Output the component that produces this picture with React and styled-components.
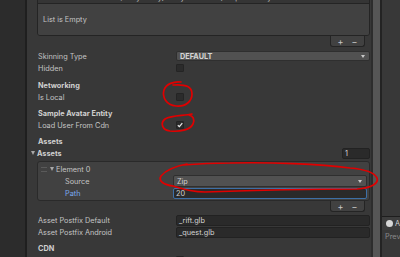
import styled, { createGlobalStyle } from 'styled-components'

const GlobalStyle = createGlobalStyle`
  html, body {
    margin: 0;
    padding: 0;
    background: #383838;
  }
  body {
    font-family: Inter, "Noto Sans", sans-serif;
  }
`

const SFrame = styled.div`
  position: relative;
  width: 400px;
  height: 257px;
  overflow: hidden;
  display: flex;
  background: #383838;
  color: #c4c4c4;
  font-size: 7.3px;
`

const SSidePanel = styled.div`
  width: 25px;
  background: #2c2c2c;
  border-right: 2px solid #1f1f1f;
`

const SInspector = styled.div`
  width: 333px;
  padding: 0 1px 0 10px;
  display: flex;
  flex-direction: column;

  & > * {
    flex-shrink: 0;
  }
`

const SList = styled.div`
  margin-top: -9px;
  border: 1px solid #242424;
  border-radius: 3px;
  overflow: hidden;
`

const SListHeader = styled.div`
  height: 11px;
  line-height: 11px;
  padding-left: 5px;
  background: #353535;
  border-bottom: 1px solid #242424;
  white-space: nowrap;
  overflow: hidden;
`

const SListBody = styled.div`
  height: 31px;
  padding-left: 5px;
  background: #414141;
  display: flex;
  align-items: center;
  padding-bottom: 1px;
  box-sizing: border-box;
`

const SFooter = styled.div`
  align-self: flex-end;
  margin-right: 5px;
  width: 35px;
  height: 11px;
  background: #414141;
  border: 1px solid #242424;
  border-top: none;
  border-radius: 0 0 3px 3px;
  display: flex;
  align-items: center;
  justify-content: center;
  gap: 8px;
  color: #c8c8c8;
  font-size: 9px;
  box-sizing: border-box;
`

const SRow = styled.div`
  height: 12px;
  flex-shrink: 0;
  display: flex;
  align-items: center;
  margin-top: ${(p) => p.$mt || 0}px;
`

const SLabel = styled.div`
  width: ${(p) => p.$w || 138}px;
  padding-left: ${(p) => p.$pl || 1}px;
  flex-shrink: 0;
  white-space: nowrap;
  color: ${(p) => (p.$active ? '#7baaf0' : '#c4c4c4')};
`

const SHeader = styled.div`
  height: 10px;
  line-height: 10px;
  padding-left: 1px;
  font-weight: 700;
  color: #d0d0d0;
  margin-top: ${(p) => p.$mt || 0}px;
`

const SDropdown = styled.div`
  flex: 1;
  height: ${(p) => p.$h || 10}px;
  margin-right: ${(p) => p.$mr || 0}px;
  background: #515151;
  border: 1px solid #2f2f2f;
  border-radius: 2px;
  box-sizing: border-box;
  display: flex;
  align-items: center;
  justify-content: space-between;
  padding: 0 4px 0 3px;
  color: #d4d4d4;
  font-weight: ${(p) => (p.$bold ? 700 : 400)};
`

const SArrow = styled.span`
  width: 0;
  height: 0;
  border-left: 2.5px solid transparent;
  border-right: 2.5px solid transparent;
  border-top: 3px solid #c8c8c8;
`

const STextField = styled.div`
  flex: ${(p) => (p.$w ? 'none' : 1)};
  width: ${(p) => (p.$w ? `${p.$w}px` : 'auto')};
  margin-left: ${(p) => (p.$w ? 'auto' : 0)};
  margin-right: ${(p) => p.$mr || 0}px;
  height: 11px;
  background: #2a2a2a;
  border: 1px solid ${(p) => (p.$focus ? '#3d6fa6' : '#222222')};
  border-radius: 2px;
  box-sizing: border-box;
  display: flex;
  align-items: center;
  padding-left: 2px;
  color: #d2d2d2;
  font-weight: 400;
`

const SCheckbox = styled.div`
  width: 8px;
  height: 8px;
  background: #2b2b2b;
  border: 1px solid #242424;
  border-radius: 1px;
  box-sizing: border-box;
  display: flex;
  align-items: center;
  justify-content: center;
`

const SFoldRow = styled.div`
  height: 12px;
  display: flex;
  align-items: center;
  font-weight: 700;
  color: #d0d0d0;
`

const STriangle = styled.span`
  width: 0;
  height: 0;
  margin: 0 ${(p) => p.$gap || 3}px 0 ${(p) => p.$ml || 0}px;
  border-left: 2.5px solid transparent;
  border-right: 2.5px solid transparent;
  border-top: 4px solid #a8a8a8;
`

const SElementBox = styled.div`
  margin-top: 2px;
  background: #414141;
  border: 1px solid #2a2a2a;
  border-radius: 3px;
  padding: 1px 0;
  display: flex;
  flex-direction: column;
`

const SHandle = styled.span`
  width: 6px;
  height: 3px;
  margin-left: 3px;
  margin-right: 3px;
  border-top: 1px solid #5a5a5a;
  border-bottom: 1px solid #5a5a5a;
`

const SElementTitle = styled.div`
  height: 12px;
  display: flex;
  align-items: center;
  color: #c4c4c4;
`

const SScrollbar = styled.div`
  width: 7px;
  background: #565656;
  border-left: 2px solid #2d2d2d;
  border-right: 2px solid #232323;
`

const SRightPanel = styled.div`
  width: 18px;
  display: flex;
  flex-direction: column;
  background: #383838;
  overflow: hidden;
`

const SRightTop = styled.div`
  height: 216px;
  flex-shrink: 0;
  border-bottom: 1px solid #1e1e1e;
`

const SRightHeader = styled.div`
  height: 13px;
  flex-shrink: 0;
  background: #3d3d3d;
  display: flex;
  align-items: center;
  gap: 2px;
  padding-left: 4px;
  color: #d0d0d0;
  white-space: nowrap;
`

const SClock = styled.span`
  width: 7px;
  height: 7px;
  border-radius: 50%;
  background: #d8d8d8;
  flex-shrink: 0;
`

const SRightText = styled.div`
  padding: 2px 0 0 3px;
  color: #8a8a8a;
  white-space: nowrap;
`

const SOverlay = styled.svg`
  position: absolute;
  left: 0;
  top: 0;
  pointer-events: none;
`

const Check = () => (
  <svg width="6" height="6" viewBox="0 0 6 6">
    <path d="M0.8 3.2 L2.4 4.7 L5.3 1.2" fill="none" stroke="#e8e8e8" strokeWidth="1.2" />
  </svg>
)

const App = () => (
  <>
    <GlobalStyle />
    <SFrame>
      <SSidePanel />
      <SInspector>
        <SList>
          <SListHeader>On Load Avatar Event (Unity Entity) UnityEventBase/RequestEntity</SListHeader>
          <SListBody>List is Empty</SListBody>
        </SList>
        <SFooter>
          <span>+</span>
          <span>−</span>
        </SFooter>

        <SRow $mt={3}>
          <SLabel>Skinning Type</SLabel>
          <SDropdown $bold>
            DEFAULT
            <SArrow />
          </SDropdown>
        </SRow>
        <SRow>
          <SLabel>Hidden</SLabel>
          <SCheckbox />
        </SRow>

        <SHeader $mt={7}>Networking</SHeader>
        <SRow>
          <SLabel>Is Local</SLabel>
          <SCheckbox />
        </SRow>

        <SHeader $mt={6}>Sample Avatar Entity</SHeader>
        <SRow>
          <SLabel>Load User From Cdn</SLabel>
          <SCheckbox>
            <Check />
          </SCheckbox>
        </SRow>

        <SHeader $mt={6}>Assets</SHeader>
        <SFoldRow>
          <STriangle $ml={-6} $gap={2} />
          Assets
          <STextField $w={28}>1</STextField>
        </SFoldRow>

        <SElementBox>
          <SElementTitle>
            <SHandle />
            <STriangle $gap={2} />
            Element 0
          </SElementTitle>
          <SRow>
            <SLabel $pl={27} $w={108}>Source</SLabel>
            <SDropdown $h={12} $mr={2}>
              Zip
              <SArrow />
            </SDropdown>
          </SRow>
          <SRow>
            <SLabel $pl={27} $w={108} $active>Path</SLabel>
            <STextField $focus $mr={2}>20</STextField>
          </SRow>
        </SElementBox>
        <SFooter>
          <span>+</span>
          <span>−</span>
        </SFooter>

        <SRow $mt={2}>
          <SLabel>Asset Postfix Default</SLabel>
          <STextField>_rift.glb</STextField>
        </SRow>
        <SRow>
          <SLabel>Asset Postfix Android</SLabel>
          <STextField>_quest.glb</STextField>
        </SRow>

        <SHeader $mt={6}>CDN</SHeader>
        <SRow>
          <SLabel />
          <SCheckbox />
        </SRow>
      </SInspector>
      <SScrollbar />
      <SRightPanel>
        <SRightTop />
        <SRightHeader>
          <SClock />
          Asset
        </SRightHeader>
        <SRightText>Preview</SRightText>
      </SRightPanel>

      <SOverlay width="400" height="257" viewBox="0 0 400 257">
        <g fill="none" stroke="#e00000" strokeWidth="1.7" strokeLinecap="round">
          <path d="M181 82 C174 81 166 84 164 90 C162 97 166 105 176 106 C186 107 192 101 192 94 C192 87 187 84 173 85" />
          <path d="M192 114 C184 116 172 115 165 119 C160 123 162 130 170 131 C180 132 190 130 193 124 C195 119 193 116 189 115" />
          <path d="M187 164 C176 166 166 170 161 176 C158 181 164 185 173 186 C185 190 195 192 205 192 C260 190 320 189 357 189 C372 188 379 183 377 178 C374 172 362 169 350 168 C320 164 270 162 230 163 C210 163 195 164 183 165" />
        </g>
      </SOverlay>
    </SFrame>
  </>
)

export default App
